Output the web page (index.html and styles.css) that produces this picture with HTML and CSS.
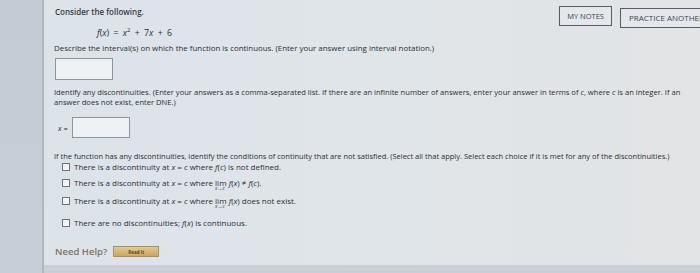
FILE: index.html
```html
<!DOCTYPE html>
<html>
<head>
<meta charset="utf-8">
<link rel="stylesheet" href="styles.css">
</head>
<body>
<div class="page">
  <div class="gutter"></div>
  <div class="main">
    <div class="head">
      <div class="lead">Consider the following.</div>
      <div class="btns">
        <div class="btn notes">MY NOTES</div>
        <div class="btn practice">PRACTICE ANOTHER</div>
      </div>
    </div>
    <div class="formula"><i>f</i>(<i>x</i>) = <i>x</i><sup>2</sup> + 7<i>x</i> + 6</div>
    <div class="para p1">Describe the interval(s) on which the function is continuous. (Enter your answer using interval notation.)</div>
    <div class="box box1"></div>
    <div class="para p2">Identify any discontinuities. (Enter your answers as a comma-separated list. If there are an infinite number of answers, enter your answer in terms of <i>c</i>, where <i>c</i> is an integer. If an answer does not exist, enter DNE.)</div>
    <div class="xrow"><span class="xl"><i>x</i> =</span><div class="box box2"></div></div>
    <div class="para p3">If the function has any discontinuities, identify the conditions of continuity that are not satisfied. (Select all that apply. Select each choice if it is met for any of the discontinuities.)</div>
    <div class="choices">
      <div class="choice c1"><span class="cb"></span><span>There is a discontinuity at <i>x</i> = <i>c</i> where <i>f</i>(<i>c</i>) is not defined.</span></div>
      <div class="choice c2"><span class="cb"></span><span>There is a discontinuity at <i>x</i> = <i>c</i> where <span class="lim">lim<span class="sub"><i>x</i>→<i>c</i></span></span> <i>f</i>(<i>x</i>) ≠ <i>f</i>(<i>c</i>).</span></div>
      <div class="choice c3"><span class="cb"></span><span>There is a discontinuity at <i>x</i> = <i>c</i> where <span class="lim">lim<span class="sub"><i>x</i>→<i>c</i></span></span> <i>f</i>(<i>x</i>) does not exist.</span></div>
      <div class="choice c4"><span class="cb"></span><span>There are no discontinuities; <i>f</i>(<i>x</i>) is continuous.</span></div>
    </div>
    <div class="help"><span class="need">Need Help?</span><span class="read">Read It</span></div>
    <div class="bottom"></div>
  </div>
</div>
</body>
</html>
```
FILE: styles.css
```css
html, body { margin: 0; padding: 0; }
body { width: 700px; height: 273px; overflow: hidden; font-family: "Open Sans", "Noto Sans", sans-serif; color: #2a2f34; }
.page { display: flex; width: 700px; height: 273px; }
.gutter { width: 42px; background: linear-gradient(180deg, #c3ccd4, #c6cfd7); border-right: 2px solid #aeb8c1; }
.main { flex: 1; position: relative; overflow: hidden; background: linear-gradient(90deg, #dce3e9 0%, #e0e5e9 50%, #e2e4e5 100%); padding-left: 11px; }
.head { display: flex; justify-content: space-between; align-items: flex-start; padding-top: 6px; box-sizing: border-box; height: 28px; }
.lead { margin-top: 1px; font-size: 8px; line-height: 10px; font-weight: 600; color: #363b40; }
.btns { display: flex; gap: 8px; margin-right: -13px; flex: none; }
.btn { border: 1px solid #555c66; background: #e4e8ec; color: #3b4350; font-size: 7.5px; height: 20px; line-height: 18px; padding: 0 7px; box-sizing: border-box; white-space: nowrap; }
.practice { margin-top: 2px; font-size: 8px; padding: 0 8px; }
.formula { margin-left: 42px; font-size: 8.8px; line-height: 10px; word-spacing: 2px; }
.formula sup { font-size: 6px; line-height: 0; }
.para { margin-left: -1px; }
.p1 { margin-top: 5px; font-size: 7.9px; line-height: 10px; }
.box { width: 58px; height: 22px; border: 1px solid #8e959b; background: #eef1f3; box-sizing: border-box; }
.box1 { margin-top: 5px; }
.p2 { margin-top: 7px; font-size: 7.6px; line-height: 10px; width: 628px; }
.xrow { display: flex; align-items: center; gap: 4px; margin-top: 10px; margin-left: 3px; }
.xl { font-size: 7.5px; }
.box2 { height: 21px; }
.p3 { margin-top: 13px; font-size: 7.5px; line-height: 10px; }
.choices { margin-left: 7px; margin-top: 1px; }
.choice { display: flex; align-items: flex-start; gap: 4px; font-size: 8px; line-height: 10px; }
.cb { width: 8px; height: 8px; border: 1px solid #6c737a; background: #f1f3f4; box-sizing: border-box; margin-top: 1px; flex: none; }
.c1 { height: 16px; }
.c2 { height: 18px; }
.c3 { height: 22px; }
.c4 { height: 10px; }
.lim { display: inline-block; position: relative; }
.lim .sub { position: absolute; left: 0; top: 8px; font-size: 5px; line-height: 5px; white-space: nowrap; }
.help { display: flex; align-items: center; gap: 6px; margin-top: 17px; height: 12px; }
.need { font-size: 9.5px; color: #7d7367; font-weight: 600; }
.read { display: inline-block; width: 46px; height: 11px; line-height: 10px; text-align: center; font-size: 4.5px; font-weight: 700; color: #5a4520; background: linear-gradient(180deg, #e2c98f, #c9a760); border: 1px solid #a89066; box-sizing: border-box; }
.bottom { position: absolute; left: 0; right: 0; bottom: 0; height: 8px; background: #c9cfd4; }
```
